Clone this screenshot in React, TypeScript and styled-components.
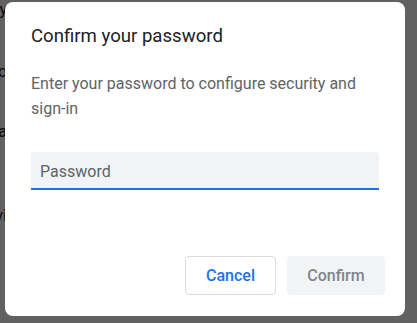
import React from "react";
import styled, { createGlobalStyle } from "styled-components";

const Global = createGlobalStyle`
  html, body { margin: 0; padding: 0; width: 417px; height: 323px; overflow: hidden; background: #fff; }
  body { font-family: Roboto, "Noto Sans", sans-serif; }
`;

const Page = styled.div`
  display: flex;
  flex-direction: column;
`;

const PageLine = styled.div<{ $top: number }>`
  display: flex;
  justify-content: flex-end;
  width: 7px;
  overflow: hidden;
  margin-top: ${(p) => p.$top}px;
  font-size: 16px;
  line-height: 20px;
  color: #202124;
  white-space: nowrap;
`;

const Scrim = styled.div`
  position: fixed;
  inset: 0;
  background: rgba(0, 0, 0, 0.62);
`;

const Dialog = styled.div`
  position: fixed;
  left: 5px;
  top: 2px;
  width: 400px;
  height: 314px;
  box-sizing: border-box;
  background: #fff;
  border-radius: 8px;
  padding: 22px 20px 21px 26px;
  display: flex;
  flex-direction: column;
`;

const Title = styled.h2`
  margin: 0;
  font-size: 18.6px;
  line-height: 24px;
  font-weight: 400;
  color: #202124;
`;

const Body = styled.p`
  margin: 23px 0 0;
  font-size: 16px;
  line-height: 25px;
  color: #5f6368;
  padding-right: 6px;
`;

const Field = styled.input`
  margin: 31px 6px 0 0;
  height: 38px;
  box-sizing: border-box;
  border: none;
  border-bottom: 2px solid #1a73e8;
  border-radius: 4px 4px 0 0;
  background: #f1f3f4;
  padding: 3px 9px 0;
  font-family: Roboto, sans-serif;
  font-size: 16px;
  color: #202124;
  outline: none;
  &::placeholder { color: #5f6368; }
`;

const Actions = styled.div`
  margin-top: auto;
  display: flex;
  justify-content: flex-end;
  gap: 11px;
`;

const Button = styled.button<{ $primary?: boolean }>`
  height: 39px;
  box-sizing: border-box;
  border-radius: 4px;
  font-family: Roboto, sans-serif;
  font-size: 16px;
  font-weight: 500;
  cursor: pointer;
  border: 1px solid ${(p) => (p.$primary ? "#f1f3f4" : "#dadce0")};
  background: ${(p) => (p.$primary ? "#f1f3f4" : "#fff")};
  color: ${(p) => (p.$primary ? "#80868b" : "#1a73e8")};
  width: ${(p) => (p.$primary ? 98 : 91)}px;
`;

export default function App() {
  return (
    <>
      <Global />
      <Page>
        <PageLine $top={0}><span>Security</span></PageLine>
        <PageLine $top={42}><span>Sign in to</span></PageLine>
        <PageLine $top={40}><span>Data</span></PageLine>
        <PageLine $top={64}><span>Provi</span></PageLine>
      </Page>
      <Scrim />
      <Dialog role="dialog">
        <Title>Confirm your password</Title>
        <Body>Enter your password to configure security and sign-in</Body>
        <Field type="password" placeholder="Password" />
        <Actions>
          <Button>Cancel</Button>
          <Button $primary disabled>Confirm</Button>
        </Actions>
      </Dialog>
    </>
  );
}
